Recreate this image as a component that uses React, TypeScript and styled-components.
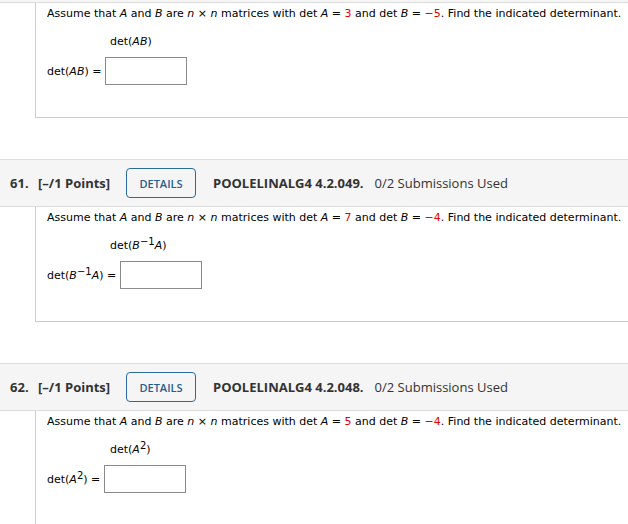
import React from "react";
import styled, { createGlobalStyle } from "styled-components";

const GlobalStyle = createGlobalStyle`
    html, body {
        margin: 0;
        padding: 0;
        background: #ffffff;
    }
    body {
        width: 628px;
        height: 524px;
        overflow: hidden;
    }
`;

const Page = styled.div`
    display: flex;
    flex-direction: column;
`;

const HeaderStub = styled.div`
    height: 2px;
    background-color: #f5f5f5;
    border-bottom: 1px solid #dddddd;
`;

const Header = styled.div`
    display: flex;
    align-items: center;
    height: 46px;
    padding-left: 10px;
    background-color: #f5f5f5;
    border-top: 1px solid #dddddd;
    border-bottom: 1px solid #dddddd;
    font-family: "Open Sans", "Liberation Sans", sans-serif;
    font-size: 13px;
    color: #333333;
`;

const Num = styled.span`
    font-weight: 700;
    width: 28px;
`;

const Points = styled.span`
    font-weight: 700;
    width: 88px;
`;

const DetailsButton = styled.button`
    all: unset;
    box-sizing: border-box;
    width: 70px;
    height: 30px;
    border: 1px solid #2a6b9c;
    border-radius: 4px;
    text-align: center;
    font-family: "Open Sans", "Liberation Sans", sans-serif;
    font-size: 11px;
    font-weight: 600;
    color: #1f5f8f;
    margin-right: 17px;
`;

const Code = styled.span`
    font-weight: 700;
    margin-right: 11px;
`;

const Box = styled.div<{ $last?: boolean }>`
    margin-left: 35px;
    border-left: 1px solid #cccccc;
    border-bottom: ${(p) => (p.$last ? "none" : "1px solid #cccccc")};
    padding: 3px 0 32px 11px;
    margin-bottom: ${(p) => (p.$last ? "0" : "41px")};
    font-family: Verdana, "DejaVu Sans", sans-serif;
    font-size: 11px;
    color: #000000;
    display: flex;
    flex-direction: column;
`;

const Line = styled.div`
    line-height: 16px;
    white-space: nowrap;
`;

const Formula = styled.div`
    line-height: 16px;
    margin: 12px 0 0 63px;
`;

const AnswerRow = styled.div`
    display: flex;
    align-items: center;
    gap: 4px;
    margin-top: 7px;
`;

const AnswerInput = styled.input`
    box-sizing: border-box;
    width: 82px;
    height: 28px;
    border: 1px solid #8a8a8a;
    border-radius: 0;
    padding: 0 4px;
    background: #ffffff;
`;

const V = styled.i`
    font-style: italic;
`;

const Red = styled.span`
    color: #e00000;
`;

const Sup = styled.sup`
    font-size: 10px;
    vertical-align: 4px;
    line-height: 0;
`;

type QuestionProps = {
    a: string;
    b: string;
    expr: React.ReactNode;
    last?: boolean;
};

function Question(props: QuestionProps) {
    return (
        <Box $last={props.last}>
            <Line>
                Assume that <V>A</V> and <V>B</V> are <V>n</V> × <V>n</V> matrices with det <V>A</V> ={" "}
                <Red>{props.a}</Red> and det <V>B</V> = <Red>{props.b}</Red>. Find the indicated determinant.
            </Line>
            <Formula>{props.expr}</Formula>
            <AnswerRow>
                <span>{props.expr} =</span>
                <AnswerInput type="text" />
            </AnswerRow>
        </Box>
    );
}

type HeadProps = {
    num: string;
    code: string;
};

function QuestionHeader(props: HeadProps) {
    return (
        <Header>
            <Num>{props.num}.</Num>
            <Points>[–/1 Points]</Points>
            <DetailsButton>DETAILS</DetailsButton>
            <Code>POOLELINALG4 {props.code}.</Code>
            <span>0/2 Submissions Used</span>
        </Header>
    );
}

export default function App() {
    return (
        <Page>
            <GlobalStyle />
            <HeaderStub />
            <Question
                a="3"
                b="−5"
                expr={
                    <>
                        det(<V>AB</V>)
                    </>
                }
            />
            <QuestionHeader num="61" code="4.2.049" />
            <Question
                a="7"
                b="−4"
                expr={
                    <>
                        det(<V>B</V>
                        <Sup>−1</Sup>
                        <V>A</V>)
                    </>
                }
            />
            <QuestionHeader num="62" code="4.2.048" />
            <Question
                a="5"
                b="−4"
                last
                expr={
                    <>
                        det(<V>A</V>
                        <Sup>2</Sup>)
                    </>
                }
            />
        </Page>
    );
}
